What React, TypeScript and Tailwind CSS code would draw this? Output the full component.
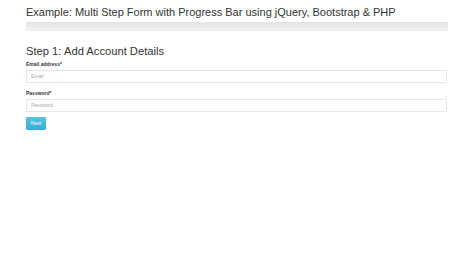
export default function App() {
  return (
    <div className="w-[474px] h-[266px] bg-white" style={{ fontFamily: '"Liberation Sans", Arial, sans-serif' }}>
      <div className="ml-[26px] w-[422px] pt-[6px]">
        <div className="text-[11px] leading-[13px] text-[#333]">
          Example: Multi Step Form with Progress Bar using jQuery, Bootstrap &amp; PHP
        </div>
        <div className="mt-[3px] h-[9px] w-full bg-gradient-to-b from-[#e3e3e3] to-[#f2f2f2]" />
        <div className="mt-[13px] text-[11.2px] leading-[14px] text-[#333]">Step 1: Add Account Details</div>
        <div className="mt-[3px] text-[5px] leading-[6px] font-bold text-[#333]">Email address*</div>
        <div className="mt-[3px] h-[13px] w-[421px] border border-[#e6e6e6] flex items-center px-[4px] text-[5px] text-[#aaa]">Email</div>
        <div className="mt-[7px] text-[5px] leading-[6px] font-bold text-[#333]">Password*</div>
        <div className="mt-[3px] h-[13px] w-[421px] border border-[#e6e6e6] flex items-center px-[4px] text-[5px] text-[#aaa]">Password</div>
        <div className="mt-[5px] h-[13px] w-[20px] rounded-[1.5px] bg-gradient-to-b from-[#5bc0de] to-[#31b0d5] flex items-center justify-center text-[5px] text-white">Next</div>
      </div>
    </div>
  );
}
